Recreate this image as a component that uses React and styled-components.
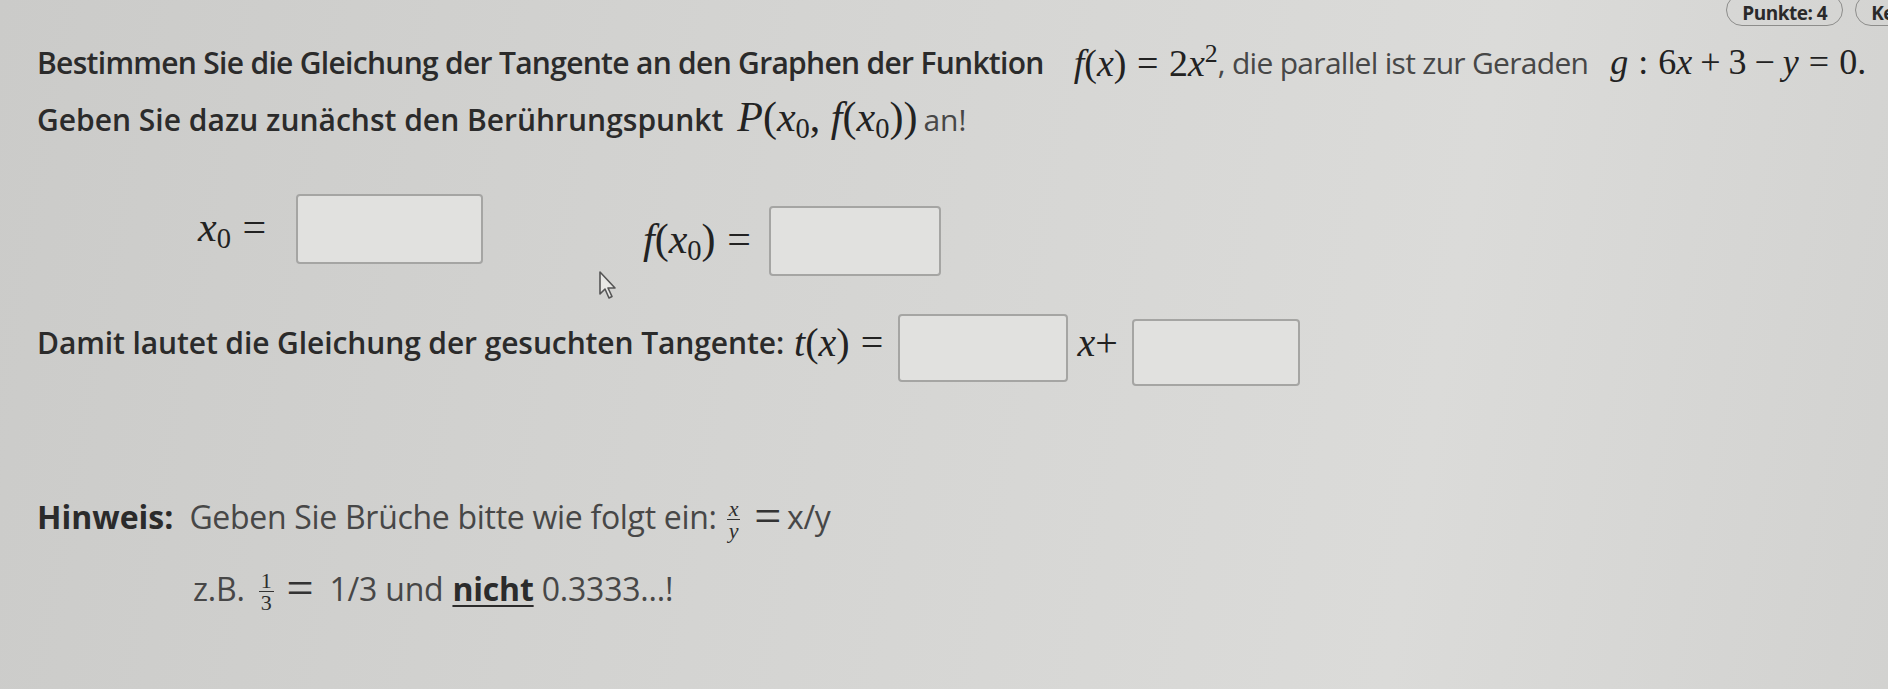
import React from 'react'
import styled, { createGlobalStyle } from 'styled-components'

const Global = createGlobalStyle`
html, body {
  margin: 0;
  padding: 0;
}
body {
  width: 1888px;
  height: 689px;
  overflow: hidden;
  background: linear-gradient(100deg, #cbcbc9 0%, #d4d4d2 40%, #dbdbd9 75%, #d2d2d0 100%);
  font-family: "Open Sans", "Noto Sans", sans-serif;
  color: #2e2e2e;
}
`

const Page = styled.div`
position: relative;
width: 1888px;
height: 689px;
overflow: hidden;
display: flex;
flex-direction: column;
`
const TopBar = styled.div`
display: flex;
justify-content: flex-end;
gap: 12px;
margin-top: -6px;
margin-right: -22px;
height: 32px;
`
const Badge = styled.div`
height: 32px;
padding: 0 15px 0 15px;
border: 1.5px solid #8d8d8b;
border-radius: 16px;
display: flex;
align-items: center;
font-size: 19px;
font-weight: 700;
letter-spacing: -0.5px;
color: #2a2a2a;
padding-top: 6px;
box-sizing: border-box;
`
const Content = styled.div`
padding-left: 37px;
display: flex;
flex-direction: column;
`
const Line = styled.div`
display: flex;
align-items: center;
white-space: nowrap;
font-size: ${p => p.fs || 30}px;
letter-spacing: ${p => (p.ls !== undefined ? p.ls : -0.6)}px;
height: ${p => p.h || 40}px;
margin-top: ${p => p.mt || 0}px;
padding-left: ${p => p.pl || 0}px;
`
const Txt = styled.span`
font-weight: ${p => p.w || 600};
color: ${p => (p.light ? '#474747' : '#2b2b2b')};
margin-left: ${p => p.ml || 0}px;
margin-right: ${p => p.mr || 0}px;
letter-spacing: ${p => (p.ls !== undefined ? `${p.ls}px` : 'inherit')};
text-decoration: ${p => (p.u ? 'underline' : 'none')};
text-underline-offset: 4px;
text-decoration-thickness: 2px;
`
const M = styled.span`
font-family: "Liberation Serif", "DejaVu Serif", serif;
font-size: ${p => p.fs || 36}px;
letter-spacing: 0;
color: #222;
margin-left: ${p => p.ml || 0}px;
margin-right: ${p => p.mr || 0}px;
`
const I = styled.i`
font-style: italic;
`
const Rel = styled.span`
margin: 0 0.278em;
`
const Op = styled.span`
margin: 0 0.222em;
`
const Sub = styled.sub`
font-size: 0.68em;
font-style: normal;
vertical-align: -0.25em;
`
const Sup = styled.sup`
font-size: 0.68em;
vertical-align: 0.55em;
`
const Frac = styled.span`
display: inline-flex;
flex-direction: column;
align-items: center;
font-family: "Liberation Serif", "DejaVu Serif", serif;
font-size: 22px;
line-height: 21px;
margin-left: ${p => p.ml || 10}px;
transform: translateY(3px);
`
const Num = styled.span`
border-bottom: 1.5px solid #333;
padding: 0 2px;
`
const Eq = styled.span`
font-family: "Liberation Serif", "DejaVu Serif", serif;
font-size: 48px;
line-height: 40px;
color: #333;
margin: 0 ${p => p.mr || 6}px 0 ${p => p.ml || 14}px;
`
const Box = styled.div`
width: ${p => p.w || 170}px;
height: ${p => p.h || 68}px;
flex-shrink: 0;
box-sizing: border-box;
border: 2px solid #a5a5a3;
border-radius: 4px;
background: #e1e1df;
margin-left: ${p => p.ml || 0}px;
margin-right: ${p => p.mr || 0}px;
margin-top: ${p => p.mt || 0}px;
`
const InputsRow = styled.div`
display: flex;
align-items: flex-start;
margin-top: 55px;
padding-left: 161px;
height: 90px;
`
const Field = styled.div`
display: flex;
align-items: center;
margin-top: ${p => p.mt || 0}px;
margin-left: ${p => p.ml || 0}px;
`
const Cursor = styled.svg`
position: absolute;
left: 598px;
top: 270px;
`

const App = () => (
  <Page>
    <Global />
    <TopBar>
      <Badge>Punkte: 4</Badge>
      <Badge>Ke</Badge>
    </TopBar>
    <Content>
      <Line mt={16} ls={-0.7}>
        <Txt>Bestimmen Sie die Gleichung der Tangente an den Graphen der Funktion</Txt>
        <M fs={38} ml={30}><I>f</I>(<I>x</I>)<Rel>=</Rel>2<I>x</I><Sup>2</Sup></M>
        <Txt w={400} light>, die parallel ist zur Geraden</Txt>
        <M ml={22}><I>g</I><Rel>:</Rel>6<I>x</I><Op>+</Op>3<Op>−</Op><I>y</I><Rel>=</Rel>0.</M>
      </Line>
      <Line mt={17} ls={0}>
        <Txt>Geben Sie dazu zunächst den Berührungspunkt</Txt>
        <M fs={42} ml={14}><I>P</I>(<I>x</I><Sub>0</Sub>, <I>f</I>(<I>x</I><Sub>0</Sub>))</M>
        <Txt w={400} light ml={6}>an!</Txt>
      </Line>
      <InputsRow>
        <Field>
          <M fs={42} mr={18}><I>x</I><Sub>0</Sub><Rel>=</Rel></M>
          <Box w={187} h={70} />
        </Field>
        <Field mt={12} ml={160}>
          <M fs={42} mr={6}><I>f</I>(<I>x</I><Sub>0</Sub>)<Rel>=</Rel></M>
          <Box w={172} h={70} />
        </Field>
      </InputsRow>
      <Line h={80} mt={18} ls={-0.1}>
        <Txt>Damit lautet die Gleichung der gesuchten Tangente:</Txt>
        <M fs={40} ml={10} mr={4}><I>t</I>(<I>x</I>)<Rel>=</Rel></M>
        <Box w={170} h={68} mt={12} />
        <M fs={40} ml={9} mr={14}><I>x</I>+</M>
        <Box w={168} h={67} mt={20} />
      </Line>
      <Line h={50} mt={109} fs={32} ls={-0.3}>
        <Txt w={700} ls={0}>Hinweis:</Txt>
        <Txt w={400} light ml={16}>Geben Sie Brüche bitte wie folgt ein:</Txt>
        <Frac ml={10}><Num><I>x</I></Num><I>y</I></Frac>
        <Eq>=</Eq>
        <Txt w={400} light>x/y</Txt>
      </Line>
      <Line h={50} mt={22} pl={156} fs={32} ls={-0.2}>
        <Txt w={400} light>z.B.</Txt>
        <Frac ml={14}><Num>1</Num>3</Frac>
        <Eq ml={13} mr={16}>=</Eq>
        <Txt w={400} light>1/3 und</Txt>
        <Txt w={700} u ml={9} mr={8}>nicht</Txt>
        <Txt w={400} light>0.3333...!</Txt>
      </Line>
    </Content>
    <Cursor width="22" height="30" viewBox="0 0 22 30">
      <path d="M2 2 L2 24 L7 19 L11 28 L14 26.5 L10 18 L17 18 Z" fill="#e8e8e6" stroke="#555" strokeWidth="1.6" strokeLinejoin="round" />
    </Cursor>
  </Page>
)

export default App
